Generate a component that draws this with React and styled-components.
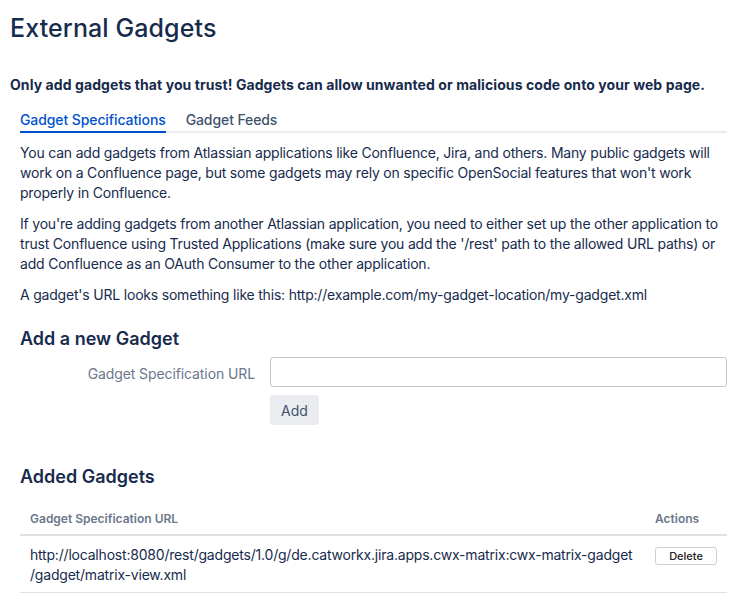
import styled, { createGlobalStyle } from 'styled-components';

const GlobalStyle = createGlobalStyle`
  body {
    margin: 0;
    background: #ffffff;
    font-family: Inter, "Liberation Sans", Arial, sans-serif;
    color: #172b4d;
  }
`;

const Page = styled.div`
  padding: 12px 12px 0 10px;
  box-sizing: border-box;
`;

const Title = styled.h1`
  margin: 0;
  font-size: 25px;
  font-weight: 500;
  line-height: 32px;
  color: #172b4d;
  letter-spacing: 0.1px;
`;

const Warning = styled.p`
  margin: 31px 0 0 0;
  font-size: 14px;
  font-weight: 700;
  line-height: 20px;
  letter-spacing: 0.08px;
`;

const Content = styled.div`
  padding: 0 0 0 10px;
`;

const Tabs = styled.div`
  display: flex;
  margin-top: 15px;
  border-bottom: 2px solid #ebecf0;
`;

const Tab = styled.div`
  font-size: 14px;
  font-weight: 500;
  line-height: 20px;
  letter-spacing: -0.1px;
  padding-bottom: 1px;
  margin-right: 20px;
  margin-bottom: -2px;
  color: ${(p) => (p.$active ? '#0052cc' : '#42526e')};
  border-bottom: 2px solid ${(p) => (p.$active ? '#0052cc' : 'transparent')};
`;

const Intro = styled.div`
  display: flex;
  flex-direction: column;
  gap: 11px;
  margin-top: 10px;
`;

const Para = styled.p`
  margin: 0;
  font-size: 14px;
  line-height: 20px;
  letter-spacing: -0.2px;
  white-space: nowrap;
`;

const SubHeading = styled.h2`
  margin: ${(p) => p.$top}px 0 0 0;
  font-size: 18px;
  font-weight: 600;
  line-height: 24px;
  letter-spacing: 0;
`;

const FormRow = styled.div`
  display: grid;
  grid-template-columns: 235px 1fr;
  column-gap: 15px;
  align-items: center;
  margin-top: ${(p) => p.$top}px;
`;

const Label = styled.label`
  text-align: right;
  font-size: 14px;
  color: #6b778c;
  letter-spacing: -0.1px;
  transform: translateY(1px);
`;

const Input = styled.input`
  height: 30px;
  box-sizing: border-box;
  border: 1px solid #c1c7d0;
  border-radius: 3px;
  font-size: 14px;
  padding: 0 6px;
  width: 100%;
`;

const AddButton = styled.button`
  justify-self: start;
  height: 30px;
  padding: 0 11px;
  border: none;
  border-radius: 3px;
  background: #ebecf0;
  color: #42526e;
  font-family: inherit;
  font-size: 14px;
`;

const Table = styled.table`
  width: 100%;
  border-collapse: collapse;
  margin-top: 15px;
  font-size: 14px;
`;

const Th = styled.th`
  text-align: left;
  font-size: 12px;
  font-weight: 600;
  color: #6b778c;
  padding: 7px 10px 8px 10px;
  border-bottom: 2px solid #dfe1e6;
  width: ${(p) => (p.$width ? `${p.$width}px` : 'auto')};
`;

const Td = styled.td`
  padding: 9px 10px 7px 10px;
  line-height: 20px;
  vertical-align: top;
  border-bottom: 1px solid #dfe1e6;
  letter-spacing: -0.2px;
  white-space: nowrap;
`;

const DeleteButton = styled.button`
  margin-top: 2px;
  height: 18px;
  width: 62px;
  padding: 0;
  border: 1px solid #d0d0d0;
  border-radius: 3px;
  background: #ffffff;
  font-family: Inter, "Liberation Sans", Arial, sans-serif;
  font-size: 11px;
  font-weight: 500;
  color: #222222;
`;

const App = () => {
  return (
    <Page>
      <GlobalStyle />
      <Title>External Gadgets</Title>
      <Warning>
        Only add gadgets that you trust! Gadgets can allow unwanted or malicious code onto your web page.
      </Warning>
      <Content>
        <Tabs>
          <Tab $active>Gadget Specifications</Tab>
          <Tab>Gadget Feeds</Tab>
        </Tabs>
        <Intro>
          <Para>
            You can add gadgets from Atlassian applications like Confluence, Jira, and others. Many public gadgets will
            <br />
            work on a Confluence page, but some gadgets may rely on specific OpenSocial features that won't work
            <br />
            properly in Confluence.
          </Para>
          <Para>
            If you're adding gadgets from another Atlassian application, you need to either set up the other application to
            <br />
            trust Confluence using Trusted Applications (make sure you add the '/rest' path to the allowed URL paths) or
            <br />
            add Confluence as an OAuth Consumer to the other application.
          </Para>
          <Para>A gadget's URL looks something like this: http://example.com/my-gadget-location/my-gadget.xml</Para>
        </Intro>

        <SubHeading $top={22}>Add a new Gadget</SubHeading>
        <FormRow $top={6}>
          <Label htmlFor="spec-url">Gadget Specification URL</Label>
          <Input id="spec-url" type="text" />
        </FormRow>
        <FormRow $top={8}>
          <span />
          <AddButton>Add</AddButton>
        </FormRow>

        <SubHeading $top={40}>Added Gadgets</SubHeading>
        <Table>
          <thead>
            <tr>
              <Th>Gadget Specification URL</Th>
              <Th $width={62}>Actions</Th>
            </tr>
          </thead>
          <tbody>
            <tr>
              <Td>
                http://localhost:8080/rest/gadgets/1.0/g/de.catworkx.jira.apps.cwx-matrix:cwx-matrix-gadget
                <br />
                /gadget/matrix-view.xml
              </Td>
              <Td>
                <DeleteButton>Delete</DeleteButton>
              </Td>
            </tr>
          </tbody>
        </Table>
      </Content>
    </Page>
  );
};

export default App;
